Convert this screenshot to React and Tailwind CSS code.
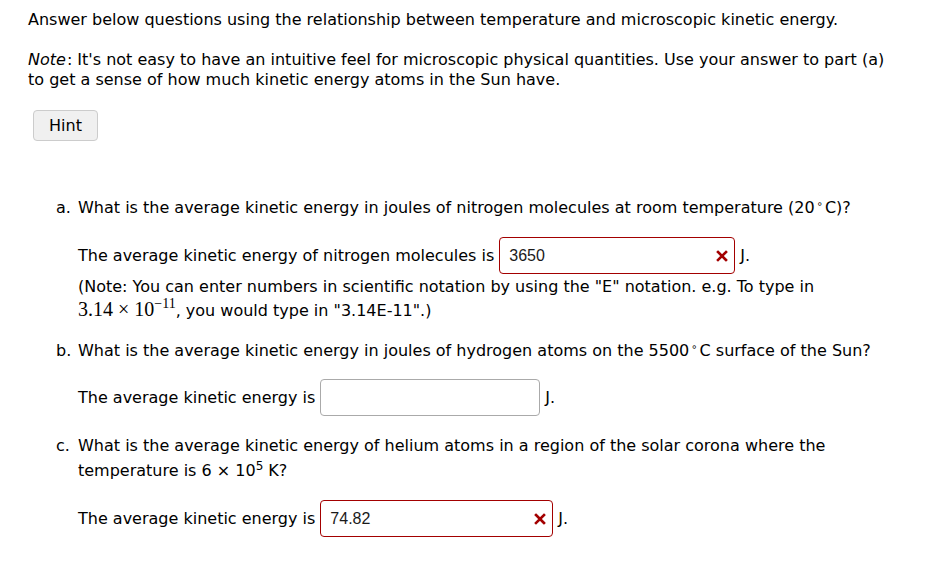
import React from 'react';

const BadX = () => (
  <svg width="12" height="12" viewBox="0 0 12 12" className="shrink-0">
    <path d="M2 2 L10 10 M10 2 L2 10" stroke="#a30000" strokeWidth="2.6" strokeLinecap="square" />
  </svg>
);

function AnswerBox({ value, width, height, wrong }) {
  return (
    <span
      className={`inline-flex items-center rounded-[4px] border bg-white pl-[9px] pr-[6px] align-middle ${
        wrong ? 'border-[#a30000]' : 'border-[#aaaaaa]'
      } ${width} ${height}`}
    >
      <span className="flex-1 text-[16px] text-[#1a1a1a] font-['Liberation_Sans',Arial,sans-serif]">{value}</span>
      {wrong && <BadX />}
    </span>
  );
}

const Deg = () => <span className="mx-[2px] text-[10px] relative -top-[6px]">∘</span>;

export default function App() {
  return (
    <div className="bg-white min-h-[572px] w-[933px] text-black text-[16px] leading-[20px] font-['DejaVu_Sans',sans-serif] pl-[28px] pt-[10px]">
      <p>Answer below questions using the relationship between temperature and microscopic kinetic energy.</p>
      <p className="mt-[20px] pr-[30px]">
        <i className="pr-[1px]">Note</i>: It's not easy to have an intuitive feel for microscopic physical quantities. Use your answer to part (a) to get a sense of how much kinetic energy atoms in the Sun have.
      </p>
      <button className="mt-[20px] ml-[5px] w-[65px] h-[31px] rounded-[4px] border border-[#cccccc] bg-[#f0f0f0] text-[16px]">
        Hint
      </button>

      <ol className="mt-[57px] pl-[28px]">
        <li className="flex">
          <span className="w-[22px] shrink-0">a.</span>
          <div>
            <p>What is the average kinetic energy in joules of nitrogen molecules at room temperature (20<Deg />C)?</p>
            <div className="mt-[17px] flex items-center gap-[5px]">
              <span>The average kinetic energy of nitrogen molecules is</span>
              <AnswerBox value="3650" width="w-[236px]" height="h-[37px]" wrong />
              <span>J.</span>
            </div>
            <p className="mt-[3px]">(Note: You can enter numbers in scientific notation by using the "E" notation. e.g. To type in</p>
            <p className="mt-[2px]">
              <span className="font-['Liberation_Serif',serif] text-[20px]">
                3.14 × 10<sup className="text-[14px] -top-[8px]">−11</sup>
              </span>
              , you would type in "3.14E-11".)
            </p>
          </div>
        </li>
        <li className="flex mt-[20px]">
          <span className="w-[22px] shrink-0">b.</span>
          <div>
            <p>What is the average kinetic energy in joules of hydrogen atoms on the 5500<Deg />C surface of the Sun?</p>
            <div className="mt-[16px] flex items-center gap-[5px]">
              <span>The average kinetic energy is</span>
              <AnswerBox value="" width="w-[220px]" height="h-[37px]" />
              <span>J.</span>
            </div>
          </div>
        </li>
        <li className="flex mt-[20px]">
          <span className="w-[22px] shrink-0">c.</span>
          <div>
            <p>What is the average kinetic energy of helium atoms in a region of the solar corona where the</p>
            <p className="mt-[5px]">
              temperature is 6 × 10<sup className="text-[12px]">5</sup> K?
            </p>
            <div className="mt-[19px] flex items-center gap-[5px]">
              <span>The average kinetic energy is</span>
              <AnswerBox value="74.82" width="w-[233px]" height="h-[37px]" wrong />
              <span>J.</span>
            </div>
          </div>
        </li>
      </ol>
    </div>
  );
}
